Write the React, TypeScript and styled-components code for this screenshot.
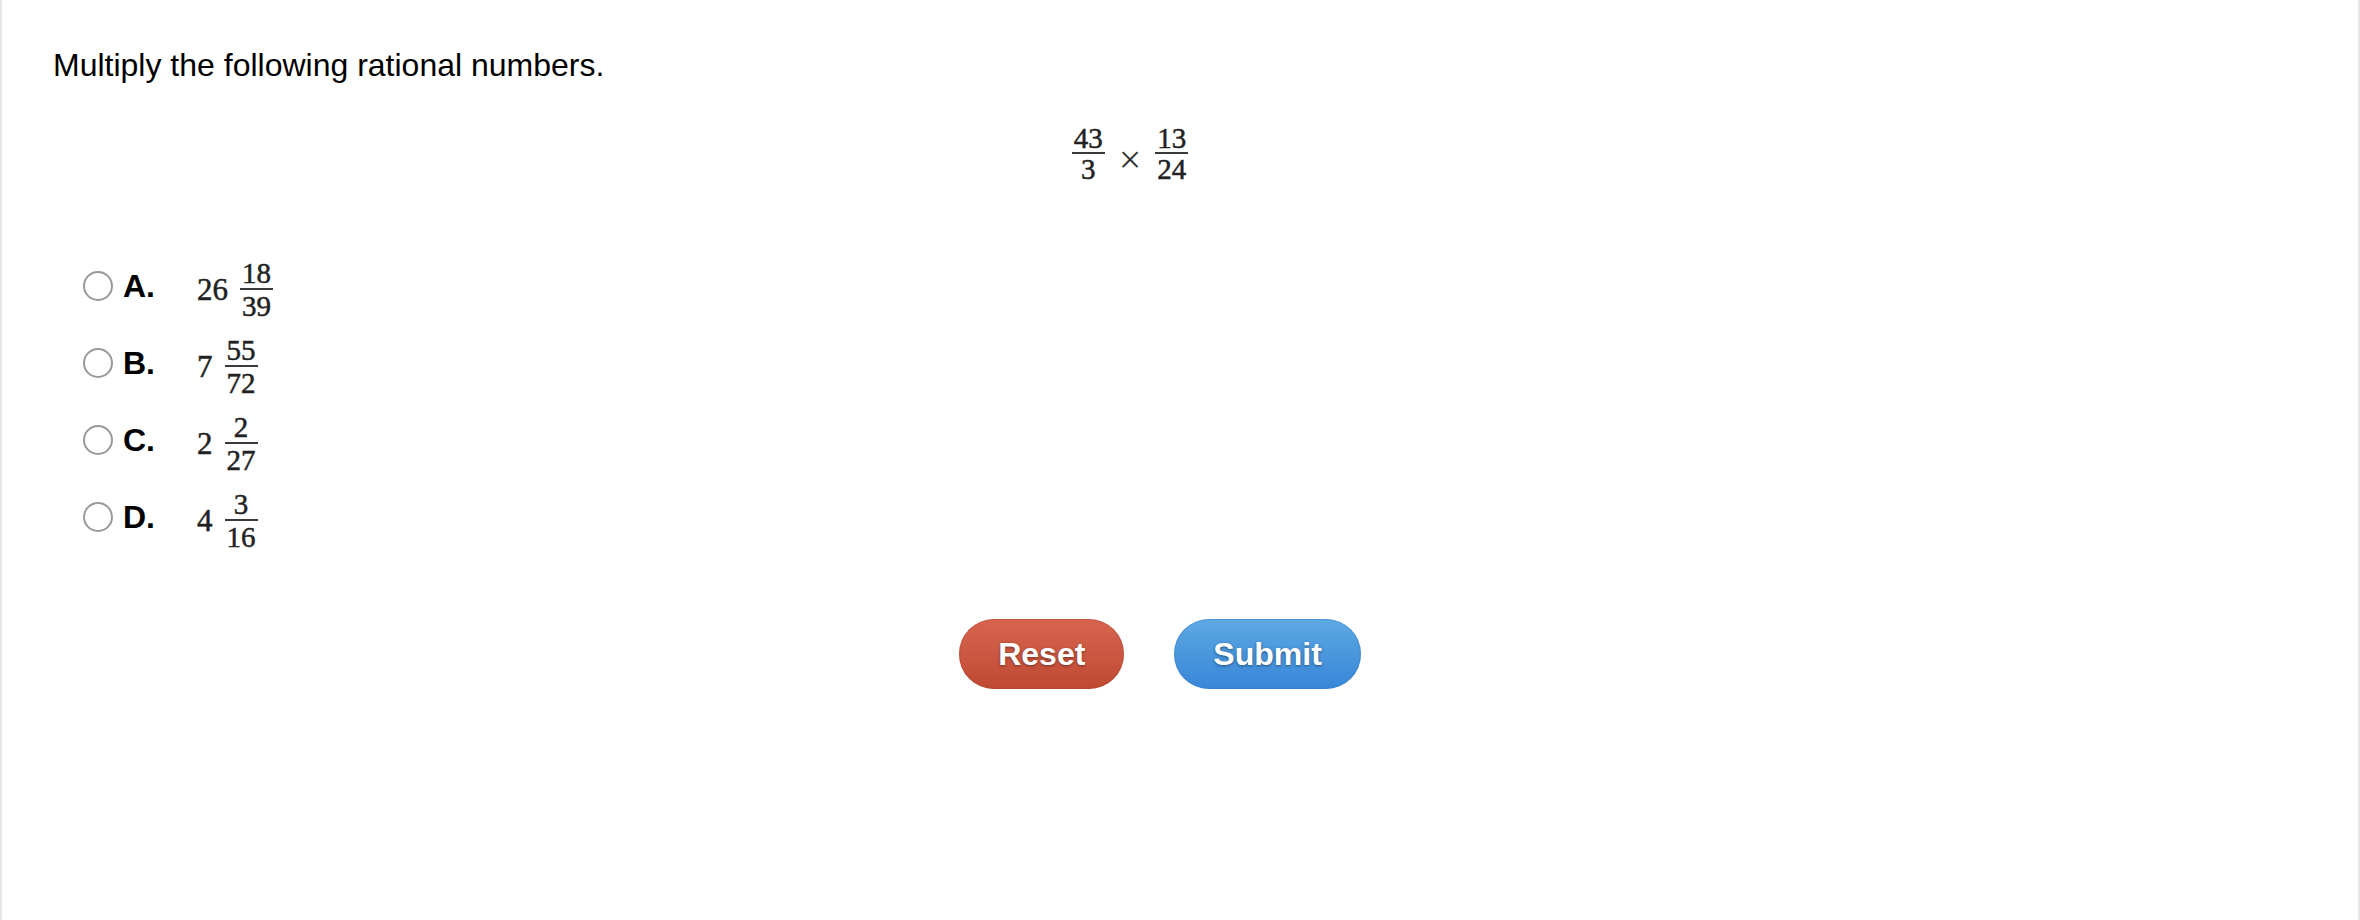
import React from "react";
import styled, { createGlobalStyle } from "styled-components";

const GlobalStyle = createGlobalStyle`
  html, body {
    margin: 0;
    padding: 0;
    background: #ffffff;
  }
  body {
    font-family: "Liberation Sans", Arial, sans-serif;
    color: #000;
  }
`;

const Page = styled.div`
  box-sizing: border-box;
  height: 920px;
  border-left: 2px solid #e6e6e6;
  border-right: 2px solid #e6e6e6;
  padding: 47px 151px 0 51px;
`;

const Title = styled.p`
  margin: 0;
  font-size: 32px;
  line-height: 36px;
`;

const Expression = styled.div`
  display: flex;
  justify-content: center;
  align-items: center;
  margin-top: 44px;
`;

const Times = styled.span`
  margin: 12px 14px 0;
  font-family: "Liberation Serif", "Times New Roman", serif;
  font-size: 40px;
  line-height: 36px;
  color: #333;
`;

const FracBox = styled.span`
  display: inline-flex;
  flex-direction: column;
  align-items: stretch;
  font-family: "Liberation Serif", "Times New Roman", serif;
  font-size: 29px;
  color: #222;
  -webkit-text-stroke: 0.5px #222;
  text-align: center;
`;

const FracPart = styled.span`
  line-height: 22px;
  padding: 0 2px;
`;

const FracBar = styled.span<{ $loose?: boolean }>`
  height: 2px;
  background: #3a3a3a;
  margin: ${(p) => (p.$loose ? "4px 0 5px" : "3px 0 4px")};
`;

const OptionList = styled.ul`
  list-style: none;
  margin: 67px 0 0;
  padding: 0 0 0 30px;
`;

const OptionRow = styled.li`
  display: flex;
  align-items: center;
  height: 77px;
`;

const Radio = styled.span`
  box-sizing: border-box;
  flex: none;
  width: 30px;
  height: 30px;
  border: 2.5px solid #999999;
  border-radius: 50%;
`;

const Letter = styled.span`
  width: 74px;
  margin-left: 10px;
  font-size: 32px;
  line-height: 36px;
  font-weight: 700;
`;

const Value = styled.span`
  display: flex;
  align-items: center;
  margin-top: 8px;
`;

const Whole = styled.span`
  margin-right: 12px;
  font-family: "Liberation Serif", "Times New Roman", serif;
  font-size: 31px;
  line-height: 24px;
  color: #222;
  -webkit-text-stroke: 0.5px #222;
`;

const ButtonRow = styled.div`
  display: flex;
  justify-content: center;
  gap: 50px;
  margin-top: 64px;
  padding-left: 60px;
`;

const Button = styled.button<{ $tone: "red" | "blue" }>`
  height: 70px;
  padding: 0 39px;
  border: none;
  border-radius: 35px;
  font-family: "Liberation Sans", Arial, sans-serif;
  font-size: 32px;
  font-weight: 700;
  color: #ffffff;
  text-shadow: 0 1px 3px rgba(0, 0, 0, 0.45);
  cursor: pointer;
  background: ${(p) =>
    p.$tone === "red"
      ? "linear-gradient(to bottom, #d6644f 0%, #cc5843 50%, #bf4931 100%)"
      : "linear-gradient(to bottom, #5ea9e2 0%, #4a97dd 50%, #3887d8 100%)"};
  box-shadow: inset 0 0 0 1px
    ${(p) => (p.$tone === "red" ? "rgba(170, 60, 40, 0.35)" : "rgba(40, 110, 190, 0.3)")};
`;

const Frac = ({ num, den, loose }: { num: string; den: string; loose?: boolean }) => (
  <FracBox>
    <FracPart>{num}</FracPart>
    <FracBar $loose={loose} />
    <FracPart>{den}</FracPart>
  </FracBox>
);

const options = [
  { letter: "A.", whole: "26", num: "18", den: "39" },
  { letter: "B.", whole: "7", num: "55", den: "72" },
  { letter: "C.", whole: "2", num: "2", den: "27" },
  { letter: "D.", whole: "4", num: "3", den: "16" },
];

const App = () => {
  return (
    <Page>
      <GlobalStyle />
      <Title>Multiply the following rational numbers.</Title>
      <Expression>
        <Frac num="43" den="3" />
        <Times>×</Times>
        <Frac num="13" den="24" />
      </Expression>
      <OptionList>
        {options.map((o) => (
          <OptionRow key={o.letter}>
            <Radio />
            <Letter>{o.letter}</Letter>
            <Value>
              <Whole>{o.whole}</Whole>
              <Frac num={o.num} den={o.den} loose />
            </Value>
          </OptionRow>
        ))}
      </OptionList>
      <ButtonRow>
        <Button $tone="red">Reset</Button>
        <Button $tone="blue">Submit</Button>
      </ButtonRow>
    </Page>
  );
};

export default App;
